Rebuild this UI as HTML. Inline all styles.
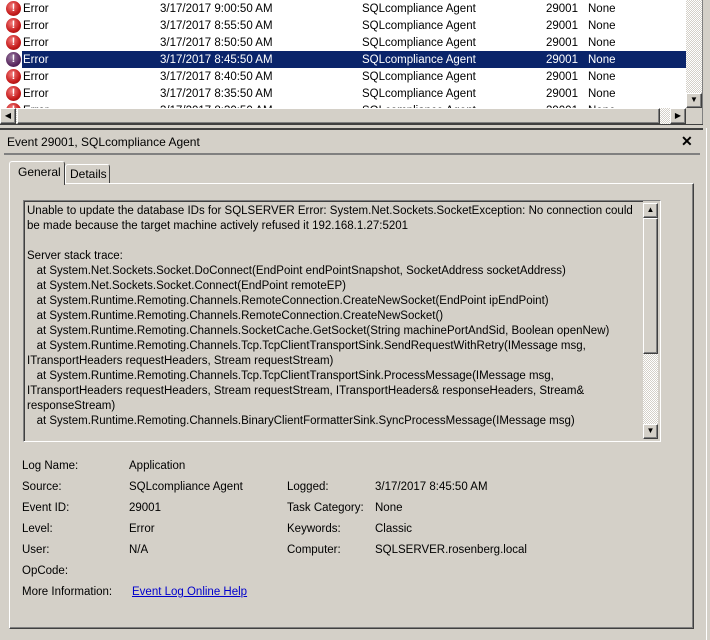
<!DOCTYPE html>
<html><head><style>
*{margin:0;padding:0;box-sizing:border-box}
body{width:710px;height:640px;background:#d4d0c8;font-family:"Liberation Sans",sans-serif;font-size:11.5px;color:#000;position:relative;overflow:hidden}
.abs{position:absolute}
.row{position:absolute;left:0;width:686px;height:17px;line-height:17px;white-space:nowrap}
.row span{position:absolute;top:1px}
.sel{background:#0a246a;color:#fff}
.ic{position:absolute;left:6px;top:1px;width:15px;height:15px;border-radius:50%;background:radial-gradient(circle at 40% 35%,#f47c7c,#c41a1a 60%,#8a0c0c);color:#fff;font-weight:bold;font-size:11px;line-height:15px;text-align:center}
.btn{position:absolute;background:#d4d0c8;border:1px solid;border-color:#fff #404040 #404040 #fff;box-shadow:inset -1px -1px #808080}
.tx{position:absolute;left:27px;white-space:pre;line-height:15px}
.lab{position:absolute;white-space:nowrap}
</style></head><body>
<div class="abs" style="left:0;top:0;width:702px;height:124px;background:#fff"></div>
<div class="row" style="top:0"><div class="ic">!</div><span style="left:23px">Error</span><span style="left:160px">3/17/2017 9:00:50 AM</span><span style="left:362px">SQLcompliance Agent</span><span style="left:546px">29001</span><span style="left:588px">None</span></div>
<div class="row" style="top:17px"><div class="ic">!</div><span style="left:23px">Error</span><span style="left:160px">3/17/2017 8:55:50 AM</span><span style="left:362px">SQLcompliance Agent</span><span style="left:546px">29001</span><span style="left:588px">None</span></div>
<div class="row" style="top:34px"><div class="ic">!</div><span style="left:23px">Error</span><span style="left:160px">3/17/2017 8:50:50 AM</span><span style="left:362px">SQLcompliance Agent</span><span style="left:546px">29001</span><span style="left:588px">None</span></div>
<div class="row" style="top:51px"><div class="abs sel" style="left:22px;top:0;width:664px;height:17px"></div><div class="ic" style="background:radial-gradient(circle at 40% 35%,#9a7aa0,#5a2a60 60%,#3a103f)">!</div><span style="left:23px;color:#fff">Error</span><span style="left:160px;color:#fff">3/17/2017 8:45:50 AM</span><span style="left:362px;color:#fff">SQLcompliance Agent</span><span style="left:546px;color:#fff">29001</span><span style="left:588px;color:#fff">None</span></div>
<div class="row" style="top:68px"><div class="ic">!</div><span style="left:23px">Error</span><span style="left:160px">3/17/2017 8:40:50 AM</span><span style="left:362px">SQLcompliance Agent</span><span style="left:546px">29001</span><span style="left:588px">None</span></div>
<div class="row" style="top:85px"><div class="ic">!</div><span style="left:23px">Error</span><span style="left:160px">3/17/2017 8:35:50 AM</span><span style="left:362px">SQLcompliance Agent</span><span style="left:546px">29001</span><span style="left:588px">None</span></div>
<div class="row" style="top:102px;height:6px;overflow:hidden"><div class="ic">!</div><span style="left:23px">Error</span><span style="left:160px">3/17/2017 8:30:50 AM</span><span style="left:362px">SQLcompliance Agent</span><span style="left:546px">29001</span><span style="left:588px">None</span></div>
<div class="abs" style="left:686px;top:0;width:16px;height:93px;background:repeating-conic-gradient(#d4d0c8 0 25%,#fff 0 50%) 0 0/2px 2px"></div>
<div class="btn" style="left:686px;top:93px;width:16px;height:15px;font-size:8px;text-align:center;line-height:12px">▼</div>
<div class="abs" style="left:0;top:108px;width:686px;height:16px;background:repeating-conic-gradient(#d4d0c8 0 25%,#fff 0 50%) 0 0/2px 2px"></div>
<div class="btn" style="left:0;top:108px;width:16px;height:16px;font-size:8px;text-align:center;line-height:14px">◀</div>
<div class="btn" style="left:17px;top:108px;width:643px;height:16px"></div>
<div class="btn" style="left:670px;top:108px;width:16px;height:16px;font-size:8px;text-align:center;line-height:14px">▶</div>
<div class="abs" style="left:686px;top:108px;width:16px;height:16px;background:#d4d0c8"></div>
<div class="abs" style="left:702px;top:0;width:1px;height:125px;background:#808080"></div>
<div class="abs" style="left:0;top:124px;width:703px;height:1px;background:#404040"></div>
<div class="abs" style="left:0;top:128px;width:703px;height:2px;background:#404040"></div>
<div class="abs" style="left:706px;top:128px;width:1px;height:512px;background:#fff"></div>
<div class="abs" style="left:7px;top:135px;font-size:12px">Event 29001, SQLcompliance Agent</div>
<div class="abs" style="left:681px;top:133px;font-size:14px;font-weight:bold">✕</div>
<div class="abs" style="left:4px;top:153px;width:696px;height:2px;background:#808080"></div>
<div class="abs" style="left:9px;top:183px;width:685px;height:446px;border:1px solid;border-color:#fff #404040 #404040 #fff;box-shadow:inset -1px -1px #808080"></div>
<div class="abs" style="left:9px;top:161px;width:56px;height:24px;border:1px solid;border-bottom:none;border-color:#fff #404040 #fff #fff;border-radius:3px 3px 0 0;background:#d4d0c8;font-size:12px;padding:3px 0 0 8px">General</div>
<div class="abs" style="left:65px;top:164px;width:45px;height:19px;border:1px solid;border-bottom:none;border-color:#fff #404040 #fff #fff;border-radius:3px 3px 0 0;font-size:12px;padding:2px 0 0 4px">Details</div>
<div class="abs" style="left:23px;top:200px;width:638px;height:242px;border:1px solid;border-color:#808080 #fff #fff #808080;box-shadow:inset 1px 1px #404040;overflow:hidden">
<div class="tx" style="left:3px;top:3px;font-size:11.5px">Unable to update the database IDs for SQLSERVER Error: System.Net.Sockets.SocketException: No connection could
be made because the target machine actively refused it 192.168.1.27:5201

Server stack trace:
   at System.Net.Sockets.Socket.DoConnect(EndPoint endPointSnapshot, SocketAddress socketAddress)
   at System.Net.Sockets.Socket.Connect(EndPoint remoteEP)
   at System.Runtime.Remoting.Channels.RemoteConnection.CreateNewSocket(EndPoint ipEndPoint)
   at System.Runtime.Remoting.Channels.RemoteConnection.CreateNewSocket()
   at System.Runtime.Remoting.Channels.SocketCache.GetSocket(String machinePortAndSid, Boolean openNew)
   at System.Runtime.Remoting.Channels.Tcp.TcpClientTransportSink.SendRequestWithRetry(IMessage msg,
ITransportHeaders requestHeaders, Stream requestStream)
   at System.Runtime.Remoting.Channels.Tcp.TcpClientTransportSink.ProcessMessage(IMessage msg,
ITransportHeaders requestHeaders, Stream requestStream, ITransportHeaders&amp; responseHeaders, Stream&amp;
responseStream)
   at System.Runtime.Remoting.Channels.BinaryClientFormatterSink.SyncProcessMessage(IMessage msg)</div>
<div class="abs" style="left:619px;top:0;width:17px;height:240px;background:#d4d0c8"></div>
<div class="btn" style="left:619px;top:2px;width:15px;height:15px;font-size:8px;text-align:center;line-height:12px">▲</div>
<div class="btn" style="left:619px;top:17px;width:15px;height:136px"></div>
<div class="abs" style="left:619px;top:153px;width:15px;height:70px;background:repeating-conic-gradient(#d4d0c8 0 25%,#fff 0 50%) 0 0/2px 2px"></div>
<div class="btn" style="left:619px;top:223px;width:15px;height:15px;font-size:8px;text-align:center;line-height:12px">▼</div>
</div>
<div class="lab" style="left:22px;top:460px">Log Name:</div><div class="lab" style="left:129px;top:460px">Application</div>
<div class="lab" style="left:22px;top:481px">Source:</div><div class="lab" style="left:129px;top:481px">SQLcompliance Agent</div>
<div class="lab" style="left:287px;top:481px">Logged:</div><div class="lab" style="left:375px;top:481px">3/17/2017 8:45:50 AM</div>
<div class="lab" style="left:22px;top:502px">Event ID:</div><div class="lab" style="left:129px;top:502px">29001</div>
<div class="lab" style="left:287px;top:502px">Task Category:</div><div class="lab" style="left:375px;top:502px">None</div>
<div class="lab" style="left:22px;top:523px">Level:</div><div class="lab" style="left:129px;top:523px">Error</div>
<div class="lab" style="left:287px;top:523px">Keywords:</div><div class="lab" style="left:375px;top:523px">Classic</div>
<div class="lab" style="left:22px;top:544px">User:</div><div class="lab" style="left:129px;top:544px">N/A</div>
<div class="lab" style="left:287px;top:544px">Computer:</div><div class="lab" style="left:375px;top:544px">SQLSERVER.rosenberg.local</div>
<div class="lab" style="left:22px;top:565px">OpCode:</div>
<div class="lab" style="left:22px;top:586px">More Information:</div><div class="lab" style="left:132px;top:586px;color:#0000cc;text-decoration:underline">Event Log Online Help</div>
</body></html>
